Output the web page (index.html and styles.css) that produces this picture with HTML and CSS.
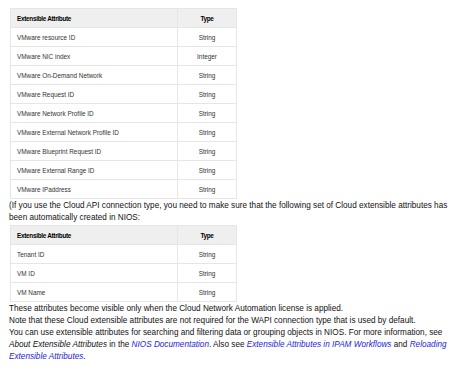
FILE: index.html
```html
<!DOCTYPE html>
<html lang="en">
<head>
  <meta charset="UTF-8">
  <meta name="viewport" content="width=device-width, initial-scale=1.0">
  <title>Cloud Extensible Attributes</title>
  <link rel="stylesheet" href="styles.css">
</head>
<body>
  <div class="page">
    <table class="attrs first">
      <thead>
        <tr><th>Extensible Attribute</th><th class="type">Type</th></tr>
      </thead>
      <tbody>
        <tr><td>VMware resource ID</td><td class="type">String</td></tr>
        <tr><td>VMware NIC index</td><td class="type">Integer</td></tr>
        <tr><td>VMware On-Demand Network</td><td class="type">String</td></tr>
        <tr><td>VMware Request ID</td><td class="type">String</td></tr>
        <tr><td>VMware Network Profile ID</td><td class="type">String</td></tr>
        <tr><td>VMware External Network Profile ID</td><td class="type">String</td></tr>
        <tr><td>VMware Blueprint Request ID</td><td class="type">String</td></tr>
        <tr><td>VMware External Range ID</td><td class="type">String</td></tr>
        <tr><td>VMware IPaddress</td><td class="type">String</td></tr>
      </tbody>
    </table>

    <p class="text">(If you use the Cloud API connection type, you need to make sure that the following set of Cloud extensible attributes has been automatically created in NIOS:</p>

    <table class="attrs">
      <thead>
        <tr><th>Extensible Attribute</th><th class="type">Type</th></tr>
      </thead>
      <tbody>
        <tr><td>Tenant ID</td><td class="type">String</td></tr>
        <tr><td>VM ID</td><td class="type">String</td></tr>
        <tr><td>VM Name</td><td class="type">String</td></tr>
      </tbody>
    </table>

    <p class="text">These attributes become visible only when the Cloud Network Automation license is applied.</p>
    <p class="text">Note that these Cloud extensible attributes are not required for the WAPI connection type that is used by default.</p>
    <p class="text">You can use extensible attributes for searching and filtering data or grouping objects in NIOS. For more information, see
      <em>About Extensible Attributes</em> in the <a href="#" class="link">NIOS Documentation</a>. Also see <a href="#" class="link">Extensible Attributes in IPAM Workflows</a> and <a href="#" class="link">Reloading Extensible Attributes</a>.</p>
  </div>
</body>
</html>
```

FILE: styles.css
```css
body {
  margin: 0;
  background: #fff;
  font-family: "Liberation Sans", Arial, Helvetica, sans-serif;
  color: #111;
}
.page {
  width: 452px;
  padding: 0 0 0 9px;
}
.attrs {
  border-collapse: collapse;
  width: 227px;
  margin: 1px 0 0 1px;
  font-size: 6.4px;
  color: #333;
}
.attrs.first {
  margin-top: 8px;
}
.attrs th,
.attrs td {
  border: 1px solid #e6e6e6;
  height: 18px;
  padding: 0 6px;
  text-align: left;
  vertical-align: middle;
}
.attrs th {
  background-color: #efefef;
  color: #000;
  font-weight: bold;
  letter-spacing: -0.3px;
}
.attrs .type {
  width: 46px;
  text-align: center;
}
.text {
  margin: 0;
  font-size: 8.2px;
  line-height: 12px;
  color: #111;
}
.attrs + .text {
  margin-top: 1px;
}
.text em {
  font-style: italic;
}
.link {
  color: #2323d6;
  font-style: italic;
  text-decoration: none;
}
```
